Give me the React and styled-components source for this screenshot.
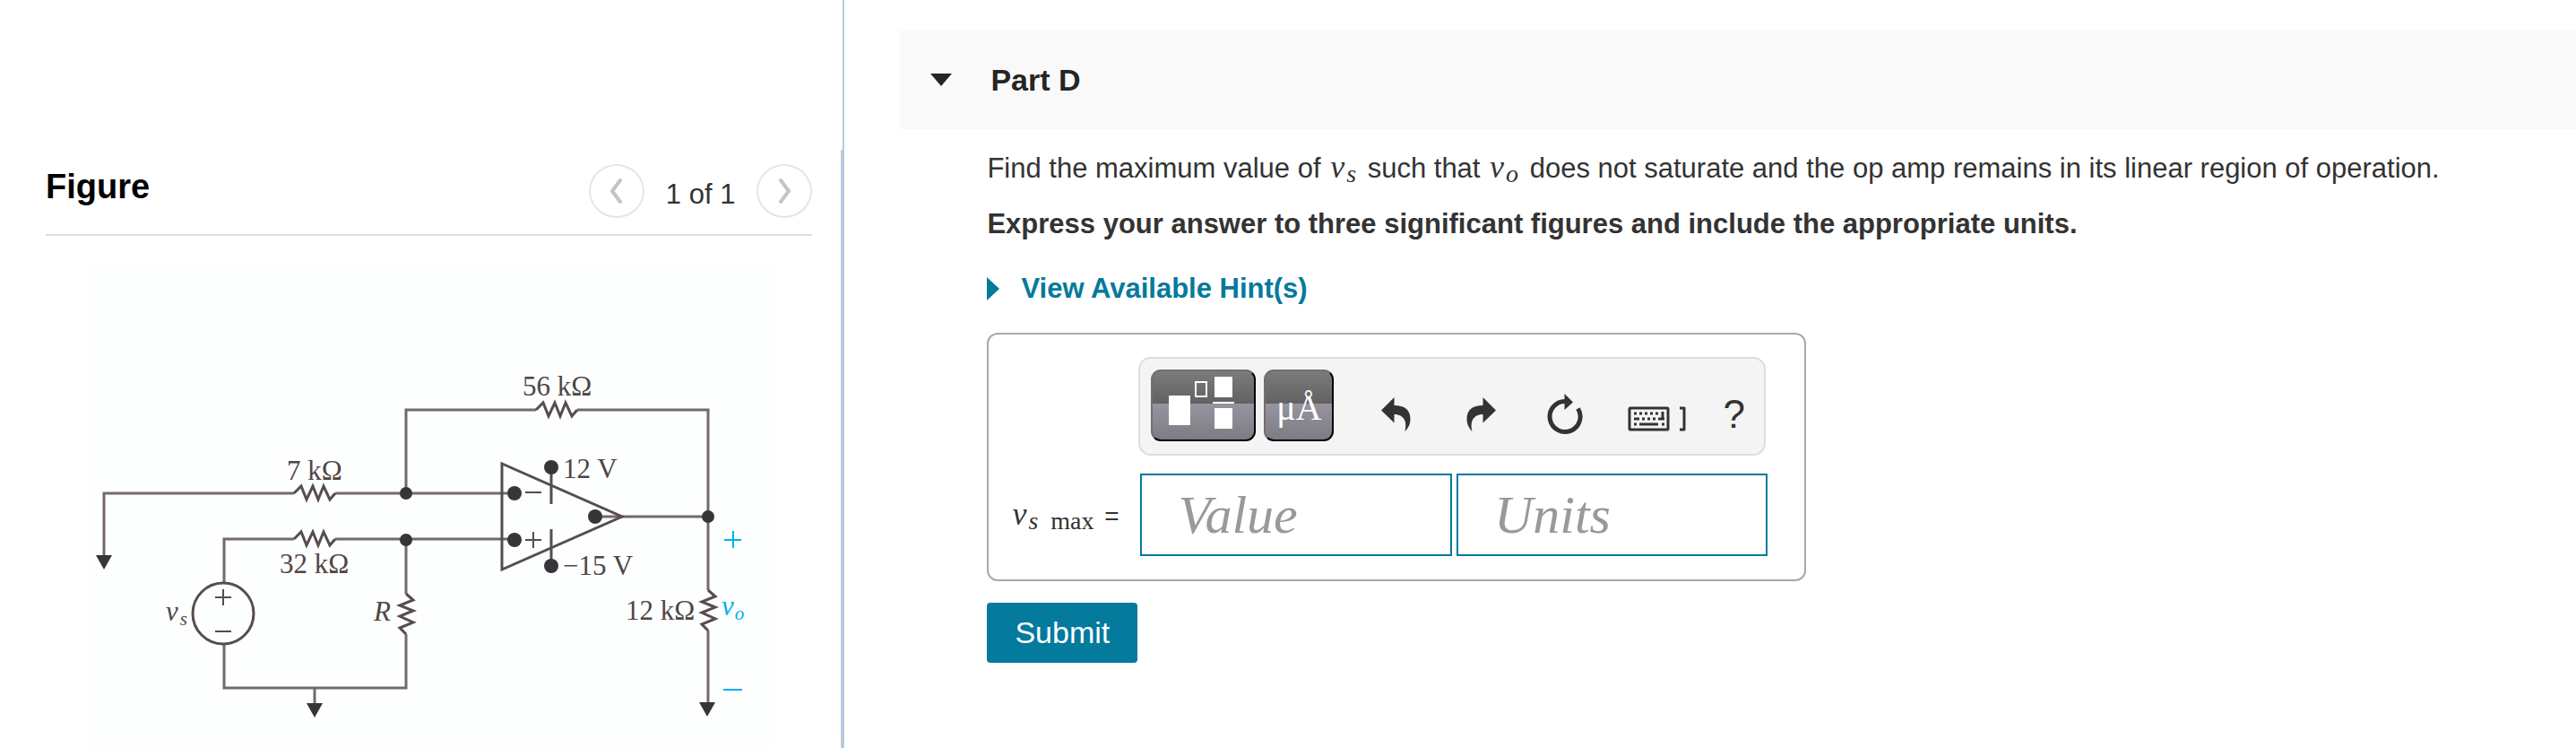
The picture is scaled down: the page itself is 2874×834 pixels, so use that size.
import React from 'react';
import styled, { createGlobalStyle } from 'styled-components';

const GlobalStyle = createGlobalStyle`
    * {
        box-sizing: border-box;
    }

    body {
        margin: 0;
        background: #fff;
        color: #333;
        font-family: "Liberation Sans", Arial, sans-serif;
        font-size: 31px;
    }
`;

const Page = styled.div`
    display: flex;
    min-height: 100vh;
    overflow: hidden;
`;

const FigurePane = styled.aside`
    flex: 0 0 33%;
    display: flex;
    flex-direction: column;
    height: 100vh;
`;

const PaneTop = styled.div`
    height: 167px;
    flex-shrink: 0;
    margin-right: 6px;
    border-right: 2px solid #b9cbdb;
`;

const PaneBody = styled.div`
    flex: 1;
    min-height: 0;
    overflow: hidden;
    margin-right: 6px;
    padding: 0 32px 0 51px;
    border-right: 4px solid #b9cbdb;
`;

const FigureHeader = styled.header`
    display: flex;
    justify-content: space-between;
    height: 96px;
    padding-top: 16px;
    border-bottom: 2px solid #ddd;
`;

const FigureTitle = styled.h2`
    margin: 0;
    padding-top: 3px;
    font-size: 38px;
    line-height: 44px;
    color: #000;
`;

const Pager = styled.nav`
    display: flex;
    height: 60px;
`;

const PagerCount = styled.span`
    padding: 0 24px;
    line-height: 68px;
`;

const RoundButton = styled.button`
    display: flex;
    align-items: center;
    justify-content: center;
    width: 62px;
    height: 60px;
    padding: 0;
    border: 2px solid #e6e6e6;
    border-radius: 50%;
    background: #fff;
`;

const Drawing = styled.svg`
    display: block;
    width: 768px;
    height: 600px;
    margin: 30px 0 0 44px;
    background: #fdfefe;
    font-family: "Liberation Serif", "Times New Roman", serif;
    font-size: 31px;
`;

const Main = styled.main`
    flex: 1;
    min-width: 0;
    padding: 34px 0 0 56px;
`;

const PartHeader = styled.header`
    display: flex;
    align-items: center;
    gap: 42px;
    height: 110px;
    padding-left: 33px;
    background: #f9f9f9;
`;

const PartTitle = styled.h2`
    margin: 0;
    font-size: 34px;
    line-height: 40px;
    color: #252525;
`;

const ToggleButton = styled.button`
    display: flex;
    padding: 0;
    border: 0;
    background: none;
`;

const PartBody = styled.div`
    padding: 24px 40px 0 97px;
`;

const Question = styled.p`
    margin: 0 0 22px;
    line-height: 40px;
    font-weight: ${(props) => (props.$bold ? 700 : 400)};
`;

const MathText = styled.span`
    padding: 0 4px 0 2px;
    font-family: "Liberation Serif", "Times New Roman", serif;
    font-size: 36px;
    line-height: 0;

    sub {
        padding-left: 2px;
        font-size: 28px;
        line-height: 0;
        vertical-align: -5px;
    }
`;

const HintLink = styled.a`
    display: flex;
    align-items: center;
    gap: 24px;
    margin-top: 31px;
    line-height: 42px;
    font-weight: 700;
    color: #047a9c;
    text-decoration: none;
`;

const AnswerBox = styled.form`
    width: 914px;
    margin-top: 28px;
    padding: 25px 41px 26px 24px;
    border: 2px solid #a9a9a9;
    border-radius: 12px;
`;

const Toolbar = styled.div`
    display: flex;
    align-items: flex-start;
    height: 110px;
    margin: 0 2px 20px 143px;
    padding: 12px 24px 0 12px;
    border: 2px solid #ddd;
    border-radius: 14px;
    background: #f4f4f4;
`;

const PaletteButton = styled.button`
    display: flex;
    flex-shrink: 0;
    align-items: flex-start;
    justify-content: center;
    width: ${(props) => props.$width};
    height: 80px;
    margin-right: 9px;
    padding: 5px 0 0;
    border: 2px outset #767676;
    border-color: #707070 #1c1c1c #1c1c1c #707070;
    border-radius: 11px;
    background: linear-gradient(#7b7b7d, #626262 47%, #9794a0 47%, #7d7c81);
    color: #fff;
    font-family: "Liberation Serif", "Times New Roman", serif;
    font-size: 40px;
    line-height: 72px;
`;

const ToolRow = styled.div`
    display: grid;
    grid-template-columns: 95px 90px 90px 106px auto;
    align-items: center;
    height: 80px;
    padding: 20px 0 0 44px;
`;

const ToolButton = styled.button`
    display: flex;
    padding: 0;
    border: 0;
    background: none;
    color: #333;
    font-family: inherit;
    font-size: 44px;
    line-height: 44px;
`;

const AnswerRow = styled.div`
    display: grid;
    grid-template-columns: 140px 1fr 1fr;
    align-items: center;
    column-gap: 5px;
`;

const AnswerLabel = styled.label`
    padding-top: 4px;
    font-size: 28px;
    white-space: nowrap;

    sub i {
        margin-right: 14px;
    }
`;

const AnswerInput = styled.input`
    min-width: 0;
    height: 92px;
    padding: 0 44px 0 40px;
    border: 2px solid #047a9c;
    background: #fff;
    font-family: "Liberation Serif", "Times New Roman", serif;
    font-size: 60px;
    font-style: italic;

    &::placeholder {
        color: #999;
        opacity: 1;
    }
`;

const SubmitButton = styled.button`
    margin-top: 24px;
    padding: 0 31px;
    border: 0;
    border-radius: 4px;
    background: #047a9c;
    color: #fff;
    font-family: inherit;
    font-size: 34px;
    line-height: 67px;
`;

const Chevron = ({ points }) => (
    <svg width="20" height="30" viewBox="0 0 20 30" fill="none" stroke="#c4c4c4" strokeWidth="4" strokeLinecap="round" strokeLinejoin="round">
        <polyline points={points} />
    </svg>
);

const UndoIcon = ({ flipped }) => (
    <svg width="33" height="38" viewBox="0 0 33 38" fill="#333">
        <path
            transform={flipped ? 'translate(33 0) scale(-1 1)' : undefined}
            d="M0 14.500L14.500 0V9C26 9 32.500 14 32.500 24C32.500 30 30 34.500 26.500 38C29 28 26 19 14.500 19V28.500Z"
        />
    </svg>
);

const ResetIcon = () => (
    <svg width="40" height="46" viewBox="0 0 40 46">
        <path d="M20 8.500A17 17 0 1 0 34.500 16.500" fill="none" stroke="#333" strokeWidth="5" />
        <path d="M19.500 0L29 9.500L19.500 18Z" fill="#333" />
    </svg>
);

const KeyboardIcon = () => (
    <svg width="66" height="38" viewBox="0 -10 66 38" fill="none" stroke="#333" strokeWidth="3">
        <rect x="2" y="2" width="43" height="24" rx="1" />
        <path d="M7 8H10M13 8H16M19 8H22M25 8H28M31 8H34" />
        <path d="M7 14H13M16 14H19M22 14H25M28 14H31M34 14H41" />
        <path d="M7 20H10M13 20H34M38 20H41" />
        <path d="M39 6V15" />
        <path d="M58 2H63V26H58" strokeLinejoin="round" />
    </svg>
);

const TemplateIcon = () => (
    <svg width="78" height="60" viewBox="0 0 78 60" fill="#fff">
        <rect x="0" y="22" width="24" height="33" />
        <rect x="30" y="7" width="12" height="16" fill="none" stroke="#fff" strokeWidth="2" />
        <rect x="51" y="1" width="20" height="23" />
        <rect x="49" y="29" width="24" height="2" />
        <rect x="51" y="36" width="20" height="23" />
    </svg>
);

const zigzag = 'l8 -8l6 15l7 -15l6 15l6 -15l7 15l6 -7';
const zigzagDown = 'l8 7l-15 6l15 6l-15 6l15 7l-15 6l7 7';

// inverting input on top, divider R on the bottom input
const Circuit = () => (
    <Drawing viewBox="95 293 768 600" role="img" aria-label="Op amp circuit">
        <g fill="none" stroke="#75696a" strokeWidth="3">
            <path d="M116 620V550H328" />
            <path d="M374 550H574" />
            <path d="M250 649V601H328" />
            <path d="M374 601H574" />
            <path d="M453 550V457H598" />
            <path d="M644 457H790V658" />
            <path d="M664 576H790" />
            <path d="M453 601V662" />
            <path d="M453 707V767H250V719" />
            <path d="M351 767V785" />
            <path d="M790 703V784" />
        </g>
        <g fill="none" stroke="#564d4c" strokeWidth="3">
            <path d={`M328 550${zigzag}`} />
            <path d={`M328 601${zigzag}`} />
            <path d={`M598 457${zigzag}`} />
            <path d={`M453 662${zigzagDown}`} />
            <path d={`M790 658${zigzagDown}`} />
            <circle cx="249" cy="684" r="34" />
            <path d="M560 517V635L694 576Z" />
            <path d="M615 521V562M615 590V631" />
            <path d="M240 666H258M249 657V675M240 704H258" strokeWidth="2" />
            <path d="M586 549H604M586 602H604M595 593V611" strokeWidth="2" />
        </g>
        <g fill="#35363a">
            <circle cx="453" cy="550" r="7" />
            <circle cx="453" cy="602" r="7" />
            <circle cx="574" cy="550" r="8" />
            <circle cx="574" cy="602" r="8" />
            <circle cx="615" cy="521" r="8" />
            <circle cx="615" cy="631" r="8" />
            <circle cx="664" cy="576" r="8" />
            <circle cx="790" cy="576" r="7" />
            <path d="M107 619H125L116 635Z" />
            <path d="M342 784H360L351 800Z" />
            <path d="M780 783H798L789 799Z" />
        </g>
        <g fill="#4f4644">
            <text x="583" y="441">56 kΩ</text>
            <text x="320" y="535">7 kΩ</text>
            <text x="312" y="639">32 kΩ</text>
            <text x="628" y="533">12 V</text>
            <text x="628" y="641">−15 V</text>
            <text x="698" y="691">12 kΩ</text>
            <text x="417" y="692" fontStyle="italic">R</text>
            <text x="185" y="692" fontStyle="italic">v<tspan dy="5" dx="2" fontSize="21">s</tspan></text>
        </g>
        <text x="805" y="686" fontStyle="italic" fill="#00aeef">v<tspan dy="5" dx="1" fontSize="21">o</tspan></text>
        <path d="M808 602H827M818 592V611M807 769H828" stroke="#00aeef" strokeWidth="2" />
    </Drawing>
);

export default function App() {
    return (
        <>
            <GlobalStyle />
            <Page>
                <FigurePane>
                    <PaneTop />
                    <PaneBody>
                        <FigureHeader>
                            <FigureTitle>Figure</FigureTitle>
                            <Pager>
                                <RoundButton type="button" aria-label="Previous figure">
                                    <Chevron points="14,3 5,15 14,27" />
                                </RoundButton>
                                <PagerCount>1 of 1</PagerCount>
                                <RoundButton type="button" aria-label="Next figure">
                                    <Chevron points="6,3 15,15 6,27" />
                                </RoundButton>
                            </Pager>
                        </FigureHeader>
                        <Circuit />
                    </PaneBody>
                </FigurePane>
                <Main>
                    <PartHeader>
                        <ToggleButton type="button" aria-label="Collapse part">
                            <svg width="26" height="14" viewBox="0 0 26 14" fill="#252525">
                                <path d="M1 0H25L13 14Z" />
                            </svg>
                        </ToggleButton>
                        <PartTitle>Part D</PartTitle>
                    </PartHeader>
                    <PartBody>
                        <Question>
                            Find the maximum value of <MathText><i>v</i><sub><i>s</i></sub></MathText> such that <MathText><i>v</i><sub><i>o</i></sub></MathText> does not saturate and the op amp remains in its linear region of operation.
                        </Question>
                        <Question $bold>
                            Express your answer to three significant figures and include the appropriate units.
                        </Question>
                        <HintLink href="#hints">
                            <svg width="14" height="26" viewBox="0 0 14 26" fill="#047a9c">
                                <path d="M0 0L14 13L0 26Z" />
                            </svg>
                            View Available Hint(s)
                        </HintLink>
                        <AnswerBox>
                            <Toolbar>
                                <PaletteButton type="button" $width="117px" aria-label="Templates">
                                    <TemplateIcon />
                                </PaletteButton>
                                <PaletteButton type="button" $width="78px">μÅ</PaletteButton>
                                <ToolRow>
                                    <ToolButton type="button" aria-label="Undo"><UndoIcon /></ToolButton>
                                    <ToolButton type="button" aria-label="Redo"><UndoIcon flipped /></ToolButton>
                                    <ToolButton type="button" aria-label="Reset"><ResetIcon /></ToolButton>
                                    <ToolButton type="button" aria-label="Keyboard shortcuts"><KeyboardIcon /></ToolButton>
                                    <ToolButton type="button">?</ToolButton>
                                </ToolRow>
                            </Toolbar>
                            <AnswerRow>
                                <AnswerLabel htmlFor="value">
                                    <MathText><i>v</i><sub><i>s</i>max</sub></MathText> =
                                </AnswerLabel>
                                <AnswerInput id="value" placeholder="Value" />
                                <AnswerInput aria-label="Units" placeholder="Units" />
                            </AnswerRow>
                        </AnswerBox>
                        <SubmitButton type="button">Submit</SubmitButton>
                    </PartBody>
                </Main>
            </Page>
        </>
    );
}
